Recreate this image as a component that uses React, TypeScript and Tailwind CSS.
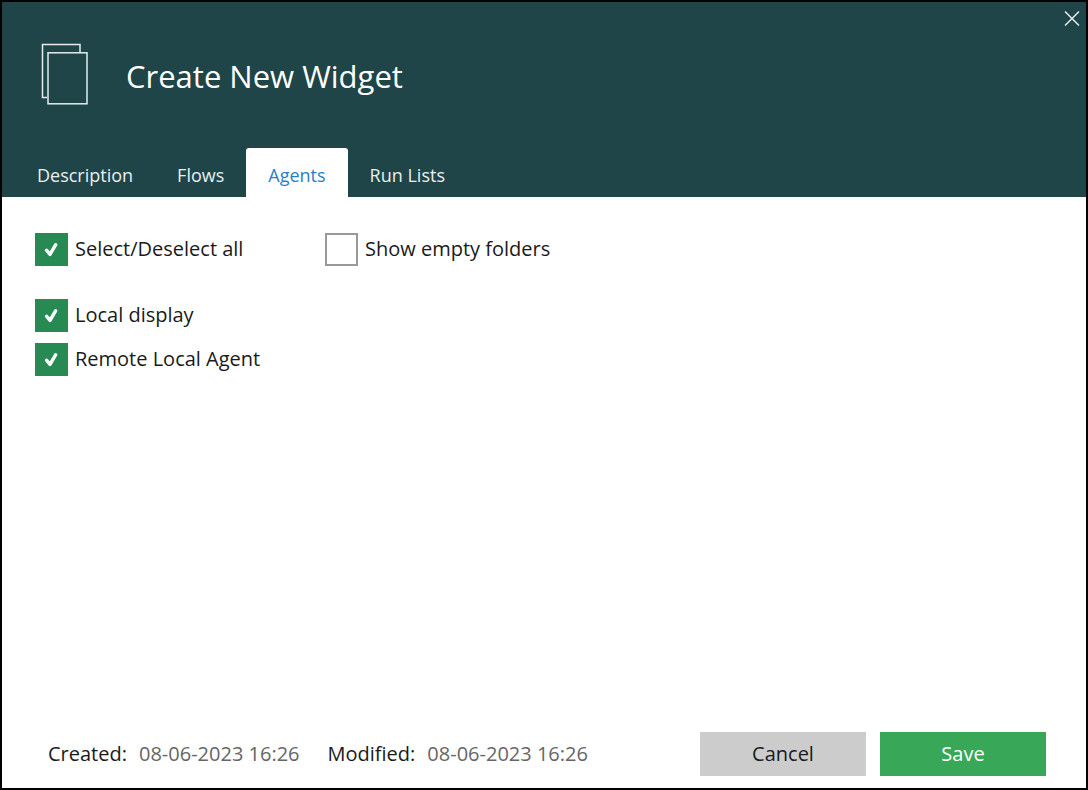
import { useState } from "react";

const tabs = ["Description", "Flows", "Agents", "Run Lists"];

type CheckProps = {
  id: string;
  label: string;
  checked: boolean;
  onChange: (checked: boolean) => void;
};

function Check({ id, label, checked, onChange }: CheckProps) {
  return (
    <div className="flex items-center gap-[7px]">
      <span className="grid size-[33px] shrink-0">
        <input
          id={id}
          type="checkbox"
          checked={checked}
          onChange={(e) => onChange(e.target.checked)}
          className="col-start-1 row-start-1 size-[33px] appearance-none border-2 border-[#999999] bg-white checked:border-[#288a53] checked:bg-[#288a53]"
        />
        {checked && (
          <svg
            viewBox="0 0 33 33"
            className="pointer-events-none col-start-1 row-start-1 size-[33px]"
            fill="none"
            stroke="white"
            strokeWidth="3.4"
            strokeLinecap="round"
            strokeLinejoin="round"
          >
            <path d="M11.6 17.2L15 21.4L20.6 11.8" />
          </svg>
        )}
      </span>
      <label htmlFor={id} className="pb-0.5 text-xl leading-7">
        {label}
      </label>
    </div>
  );
}

export default function App() {
  const [active, setActive] = useState("Agents");
  const [showEmpty, setShowEmpty] = useState(false);
  const [local, setLocal] = useState(true);
  const [remote, setRemote] = useState(true);

  const toggleAll = (value: boolean) => {
    setLocal(value);
    setRemote(value);
  };

  return (
    <div className="flex min-h-screen flex-col border-2 border-black bg-white font-['Open_Sans','Noto_Sans',sans-serif] text-[#1a1a1a]">
      <header className="bg-[#1f4548] text-white">
        <div className="flex items-start justify-between pb-[42px]">
          <div className="flex items-center gap-9 pt-10 pl-[38px]">
            <svg
              viewBox="0 0 50 64"
              className="h-16 w-[50px]"
              fill="none"
              stroke="#e6ecec"
              strokeWidth="1.5"
            >
              <path d="M7 55.5H2.5V2.5H40V10" />
              <rect x="8" y="10.8" width="39" height="51" />
            </svg>
            <h1 className="pt-1 text-[31px] leading-10">Create New Widget</h1>
          </div>
          <button type="button" aria-label="Close" className="py-2 pr-1.5 pl-2">
            <svg
              viewBox="0 0 16 16"
              className="size-4"
              fill="none"
              stroke="#e6ecec"
              strokeWidth="1.5"
            >
              <path d="M1 1.5L15 15.5M15 1.5L1 15.5" />
            </svg>
          </button>
        </div>
        <nav role="tablist" className="flex pl-[13px]">
          {tabs.map((tab) => (
            <button
              key={tab}
              type="button"
              role="tab"
              aria-selected={tab === active}
              onClick={() => setActive(tab)}
              className={
                tab === active
                  ? "h-[49px] rounded-t-[3px] bg-white px-[22px] pt-1 text-lg text-[#2a7fc4]"
                  : "h-[49px] px-[22px] pt-1 text-lg text-[#e9efef]"
              }
            >
              {tab}
            </button>
          ))}
        </nav>
      </header>

      <main className="flex-1 px-[33px] pt-9">
        <div className="flex">
          <div className="w-[290px]">
            <Check
              id="all"
              label="Select/Deselect all"
              checked={local && remote}
              onChange={toggleAll}
            />
          </div>
          <Check
            id="empty"
            label="Show empty folders"
            checked={showEmpty}
            onChange={setShowEmpty}
          />
        </div>
        <div className="mt-[33px] flex flex-col gap-[11px]">
          <Check id="local" label="Local display" checked={local} onChange={setLocal} />
          <Check id="remote" label="Remote Local Agent" checked={remote} onChange={setRemote} />
        </div>
      </main>

      <footer className="flex items-center justify-between pr-10 pb-3 pl-[46px]">
        <dl className="flex gap-7 text-xl">
          <div className="flex gap-3">
            <dt>Created:</dt>
            <dd className="text-[#666666]">08-06-2023 16:26</dd>
          </div>
          <div className="flex gap-3">
            <dt>Modified:</dt>
            <dd className="text-[#666666]">08-06-2023 16:26</dd>
          </div>
        </dl>
        <div className="flex gap-[14px] text-xl">
          <button type="button" className="h-11 w-[166px] bg-[#cccccc]">
            Cancel
          </button>
          <button type="button" className="h-11 w-[166px] bg-[#38a757] text-white">
            Save
          </button>
        </div>
      </footer>
    </div>
  );
}
